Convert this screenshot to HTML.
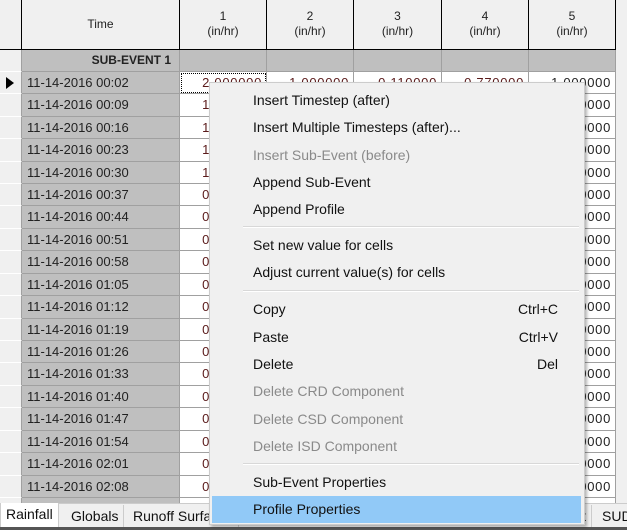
<!DOCTYPE html>
<html><head><meta charset="utf-8"><style>
*{margin:0;padding:0;box-sizing:border-box}
body{width:627px;height:530px;overflow:hidden;background:#f0f0f0;font-family:"Liberation Sans",sans-serif;position:relative}
.a{position:absolute}
.h{background:#f0f0f0;border-right:1px solid #000;border-bottom:1px solid #000;font-size:12px;color:#222;text-align:center;line-height:15px}
.r{position:absolute;left:0;width:617px;height:23px}
.r div{position:absolute;top:0;height:100%;border-right:1px solid #a0a0a0;border-bottom:1px solid #a0a0a0;font-size:13px;line-height:21px;color:#222;white-space:nowrap;overflow:hidden}
.rh{left:0;width:22px;background:#f0f0f0;border-bottom-color:#fff!important}
.t{left:22px;width:158px;background:#bfbfbf;padding-left:5px}
.c{background:#fff;text-align:right;padding-right:4px;color:#5a1a1a!important;letter-spacing:0.7px}
.c1{left:180px;width:87px}.c2{left:267px;width:87px}.c3{left:354px;width:88px}.c4{left:442px;width:87px}.c5{left:529px;width:87px}
.menu{left:209px;top:82px;width:376px;height:443px;background:#f0f0f0;border:1px solid #ccc;box-shadow:2px 2px 3px rgba(0,0,0,.3);font-size:14px;color:#111}
.mi{position:absolute;left:43px;height:20px;line-height:20px}
.dis{color:#8a8a8a}
.sc{position:absolute;right:26px;height:20px;line-height:20px}
.sep{position:absolute;left:33px;right:5px;height:2px;border-top:1px solid #d8d8d8;border-bottom:1px solid #fff}
.tab{position:absolute;top:505px;height:23px;font-size:14px;line-height:22px;color:#111;border-right:1px solid #ccc;padding:0 5px}
</style></head><body>
<div class="a h" style="left:0;top:0;width:22px;height:50px"></div>
<div class="a h" style="left:22px;top:0;width:158px;height:50px;line-height:48px">Time</div>
<div class="a h" style="left:180px;top:0;width:87px;height:50px;padding-top:9px">1<br>(in/hr)</div>
<div class="a h" style="left:267px;top:0;width:87px;height:50px;padding-top:9px">2<br>(in/hr)</div>
<div class="a h" style="left:354px;top:0;width:88px;height:50px;padding-top:9px">3<br>(in/hr)</div>
<div class="a h" style="left:442px;top:0;width:87px;height:50px;padding-top:9px">4<br>(in/hr)</div>
<div class="a h" style="left:529px;top:0;width:87px;height:50px;padding-top:9px">5<br>(in/hr)</div>
<div class="r" style="top:50px;height:22px"><div class="rh"></div><div class="t" style="text-align:right;padding-right:8px;font-weight:bold;font-size:12px">SUB-EVENT 1</div><div class="c1" style="background:#bfbfbf"></div><div class="c2" style="background:#bfbfbf"></div><div class="c3" style="background:#bfbfbf"></div><div class="c4" style="background:#bfbfbf"></div><div class="c5" style="background:#bfbfbf"></div></div>
<div id="rows"></div>
<script>
var tops=[72,94,117,139,162,184,206,229,251,274,296,319,341,363,386,408,431,453,476,498];
var h='';
for(var i=0;i<20;i++){
 var m=2+7*i,hh=Math.floor(m/60),mm=m%60;
 var ts='11-14-2016 '+('0'+hh).slice(-2)+':'+('0'+mm).slice(-2);
 var ht=(i<19?tops[i+1]-tops[i]:8);
 var v1=i==0?'2.000000':(i<5?'1.000000':'0.500000');
 h+='<div class="r" style="top:'+tops[i]+'px;height:'+ht+'px"><div class="rh">'+(i==0?'<span style="position:absolute;left:6px;top:5px;border-left:8px solid #000;border-top:6px solid transparent;border-bottom:6px solid transparent"></span>':'')+'</div><div class="t">'+(i<19?ts:'')+'</div>'+
 '<div class="c c1"'+(i==0?' style="outline:1px dotted #000;outline-offset:-2px"':'')+'>'+(i<19?v1:'')+'</div><div class="c c2">'+(i<19?'1.000000':'')+'</div><div class="c c3">'+(i<19?'0.110000':'')+'</div><div class="c c4">'+(i<19?'0.770000':'')+'</div><div class="c c5" style="color:#222!important">'+(i<19?'1.000000':'')+'</div></div>';
}
document.getElementById('rows').innerHTML=h;
</script>
<div class="a" style="left:0;top:503px;width:627px;height:27px;background:#f0f0f0;border-top:1px solid #ccc"></div>
<div class="tab" style="left:0;top:503px;height:25px;background:#fff;border-left:1px solid #ccc">Rainfall</div>
<div class="tab" style="left:66px">Globals</div>
<div class="tab" style="left:128px">Runoff Surfaces</div>
<div class="tab" style="left:577px">t</div>
<div class="tab" style="left:597px;border:none">SUDS</div>
<div class="a" style="left:0;top:527px;width:627px;height:3px;background:#555"></div>
<div class="a menu">
<div class="mi" style="top:7px">Insert Timestep (after)</div>
<div class="mi" style="top:34px">Insert Multiple Timesteps (after)...</div>
<div class="mi dis" style="top:62px">Insert Sub-Event (before)</div>
<div class="mi" style="top:89px">Append Sub-Event</div>
<div class="mi" style="top:116px">Append Profile</div>
<div class="sep" style="top:143px"></div>
<div class="mi" style="top:152px">Set new value for cells</div>
<div class="mi" style="top:179px">Adjust current value(s) for cells</div>
<div class="sep" style="top:207px"></div>
<div class="mi" style="top:216px">Copy</div><div class="sc" style="top:216px">Ctrl+C</div>
<div class="mi" style="top:244px">Paste</div><div class="sc" style="top:244px">Ctrl+V</div>
<div class="mi" style="top:271px">Delete</div><div class="sc" style="top:271px">Del</div>
<div class="mi dis" style="top:298px">Delete CRD Component</div>
<div class="mi dis" style="top:326px">Delete CSD Component</div>
<div class="mi dis" style="top:353px">Delete ISD Component</div>
<div class="sep" style="top:380px"></div>
<div class="mi" style="top:389px">Sub-Event Properties</div>
<div class="a" style="left:2px;top:413px;width:369px;height:27px;background:#91c9f7"></div>
<div class="mi" style="top:416px">Profile Properties</div>
</div>
</body></html>
